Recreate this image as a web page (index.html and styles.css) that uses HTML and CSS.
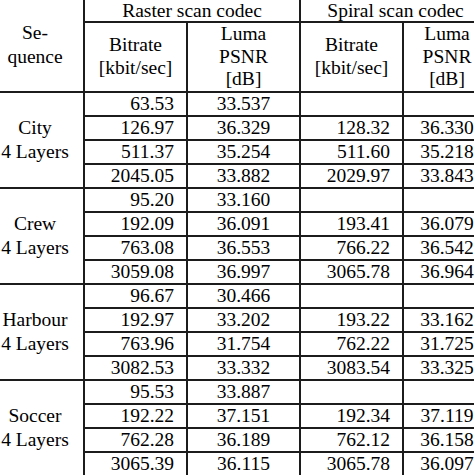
FILE: index.html
```html
<!DOCTYPE html>
<html>
<head>
<meta charset="utf-8">
<link rel="stylesheet" href="styles.css">
</head>
<body>
<table class="results">
  <colgroup>
    <col class="c-seq">
    <col class="c-bit">
    <col class="c-psnr">
    <col class="c-bit">
    <col class="c-psnr2">
  </colgroup>
  <thead>
    <tr class="h1">
      <th rowspan="2" class="seq">Se-<br>quence</th>
      <th colspan="2">Raster scan codec</th>
      <th colspan="2">Spiral scan codec</th>
    </tr>
    <tr class="h2">
      <th>Bitrate<br>[kbit/sec]</th>
      <th>Luma<br>PSNR<br>[dB]</th>
      <th>Bitrate<br>[kbit/sec]</th>
      <th>Luma<br>PSNR<br>[dB]</th>
    </tr>
  </thead>
  <tbody>
    <tr><td rowspan="4" class="seq">City<br>4 Layers</td><td class="num">63.53</td><td class="ps">33.537</td><td class="num"></td><td class="ps"></td></tr>
    <tr><td class="num">126.97</td><td class="ps">36.329</td><td class="num">128.32</td><td class="ps">36.330</td></tr>
    <tr><td class="num">511.37</td><td class="ps">35.254</td><td class="num">511.60</td><td class="ps">35.218</td></tr>
    <tr><td class="num">2045.05</td><td class="ps">33.882</td><td class="num">2029.97</td><td class="ps">33.843</td></tr>
  </tbody>
  <tbody>
    <tr><td rowspan="4" class="seq">Crew<br>4 Layers</td><td class="num">95.20</td><td class="ps">33.160</td><td class="num"></td><td class="ps"></td></tr>
    <tr><td class="num">192.09</td><td class="ps">36.091</td><td class="num">193.41</td><td class="ps">36.079</td></tr>
    <tr><td class="num">763.08</td><td class="ps">36.553</td><td class="num">766.22</td><td class="ps">36.542</td></tr>
    <tr><td class="num">3059.08</td><td class="ps">36.997</td><td class="num">3065.78</td><td class="ps">36.964</td></tr>
  </tbody>
  <tbody>
    <tr><td rowspan="4" class="seq">Harbour<br>4 Layers</td><td class="num">96.67</td><td class="ps">30.466</td><td class="num"></td><td class="ps"></td></tr>
    <tr><td class="num">192.97</td><td class="ps">33.202</td><td class="num">193.22</td><td class="ps">33.162</td></tr>
    <tr><td class="num">763.96</td><td class="ps">31.754</td><td class="num">762.22</td><td class="ps">31.725</td></tr>
    <tr><td class="num">3082.53</td><td class="ps">33.332</td><td class="num">3083.54</td><td class="ps">33.325</td></tr>
  </tbody>
  <tbody>
    <tr><td rowspan="4" class="seq">Soccer<br>4 Layers</td><td class="num">95.53</td><td class="ps">33.887</td><td class="num"></td><td class="ps"></td></tr>
    <tr><td class="num">192.22</td><td class="ps">37.151</td><td class="num">192.34</td><td class="ps">37.119</td></tr>
    <tr><td class="num">762.28</td><td class="ps">36.189</td><td class="num">762.12</td><td class="ps">36.158</td></tr>
    <tr><td class="num">3065.39</td><td class="ps">36.115</td><td class="num">3065.78</td><td class="ps">36.097</td></tr>
  </tbody>
</table>
</body>
</html>
```
FILE: styles.css
```css
html, body {
  margin: 0;
  padding: 0;
  background: #ffffff;
  overflow: hidden;
}
body {
  width: 474px;
  height: 475px;
}
.results {
  border-collapse: collapse;
  table-layout: fixed;
  width: 505px;
  margin-left: -15px;
  margin-top: -2px;
  font-family: "Liberation Serif", "Times New Roman", serif;
  font-size: 19.5px;
  line-height: 24px;
  color: #000000;
}
.c-seq { width: 98px; }
.c-bit { width: 103px; }
.c-psnr { width: 113px; }
.c-psnr2 { width: 88px; }
.results th,
.results td {
  border: 2px solid #1c1c1c;
  padding: 0;
  font-weight: normal;
  text-align: center;
  vertical-align: middle;
}
.h1 th { height: 21px; line-height: 21px; }
.h2 th { height: 67px; line-height: 22.5px; }
.results th.seq { line-height: 24px; }
.results td { height: 22px; line-height: 22px; }
.results td.num {
  text-align: right;
  padding-right: 12px;
}
.results td.ps { text-align: center; }
.results td.seq { line-height: 24px; }
```
